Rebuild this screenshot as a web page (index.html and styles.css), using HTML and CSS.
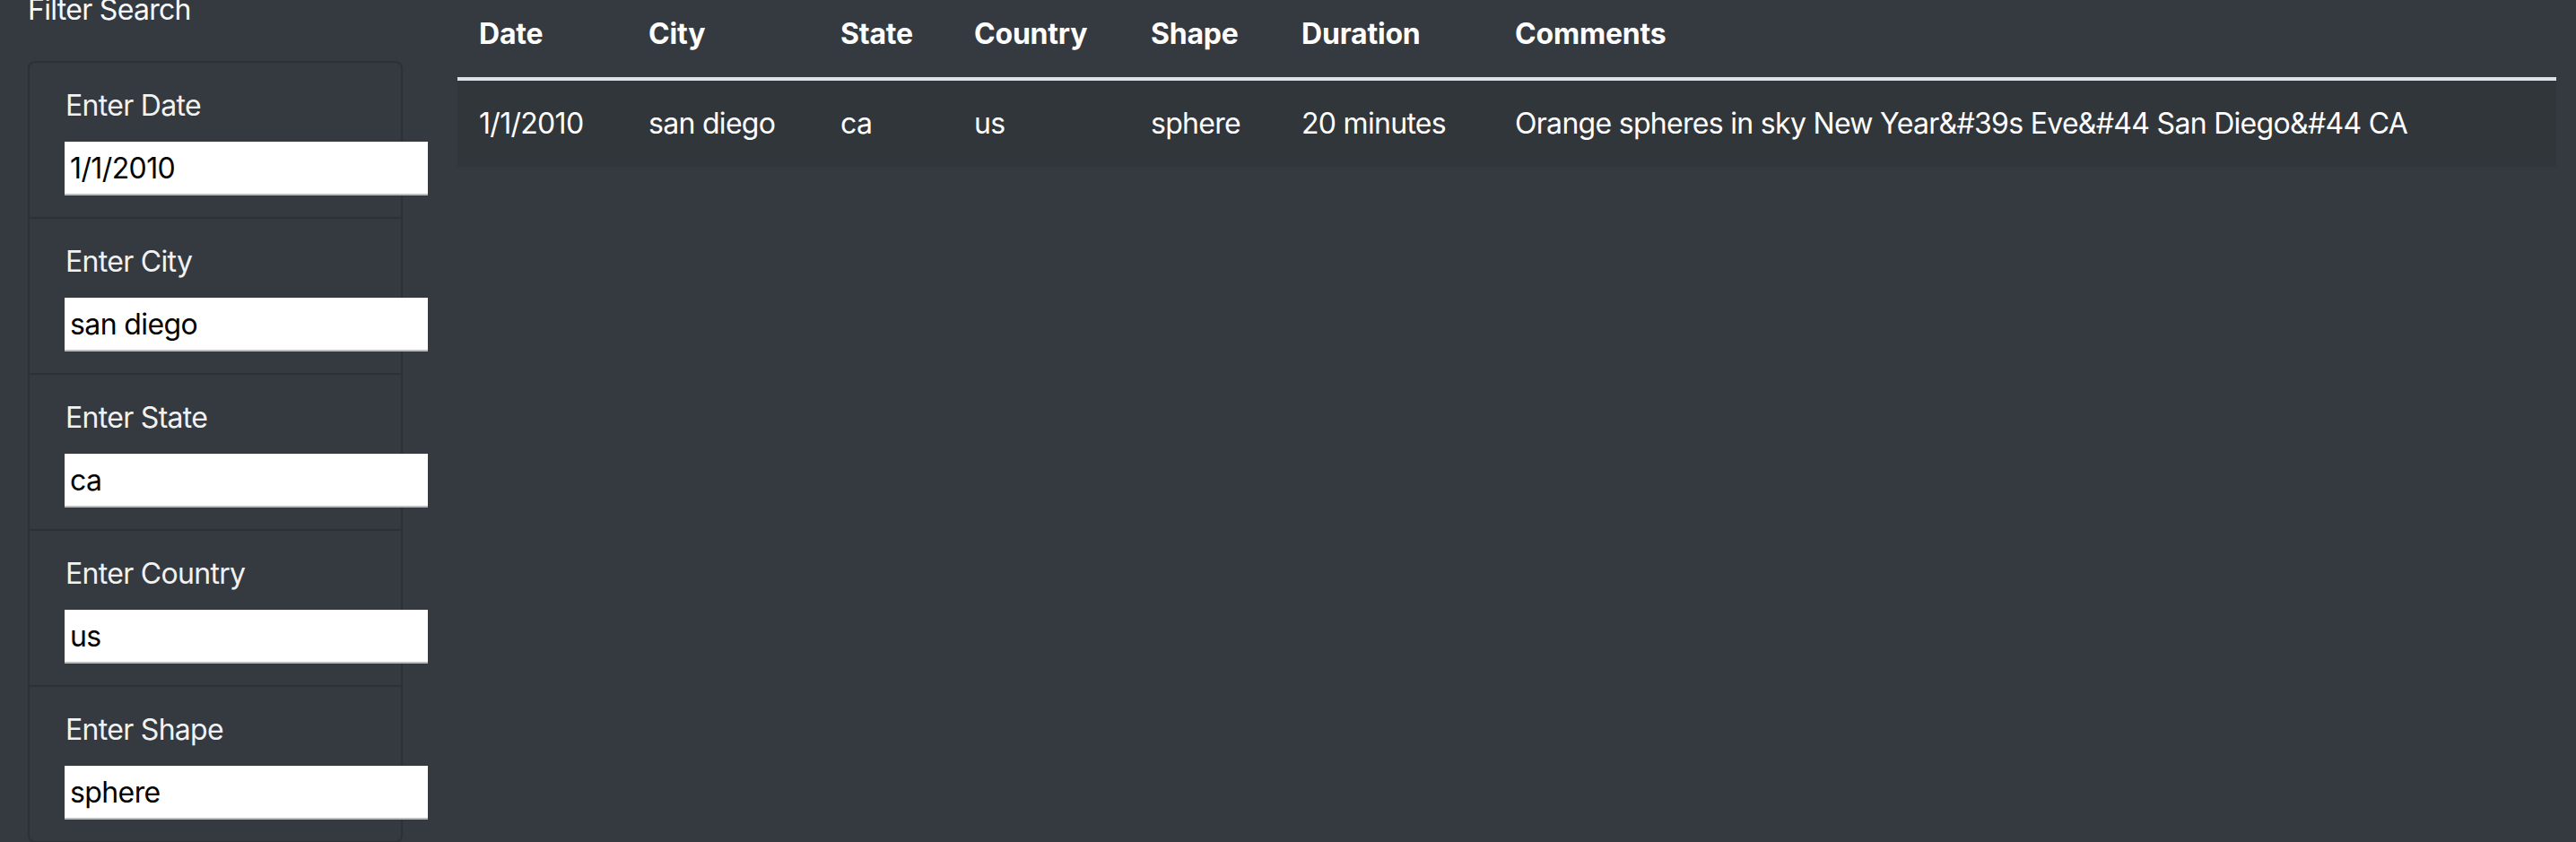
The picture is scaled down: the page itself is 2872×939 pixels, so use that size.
FILE: index.html
```html
<!DOCTYPE html>
<html lang="en">
<head>
<meta charset="utf-8">
<title>UFO Sightings</title>
<link rel="stylesheet" href="styles.css">
</head>
<body>
<div class="page">
  <aside class="sidebar">
    <h5 class="filter-title">Filter Search</h5>
    <ul class="filters">
      <li class="filter"><label class="filter-label" for="datetime">Enter Date</label><input class="filter-input" id="datetime" type="text" value="1/1/2010"></li>
      <li class="filter"><label class="filter-label" for="city">Enter City</label><input class="filter-input" id="city" type="text" value="san diego"></li>
      <li class="filter"><label class="filter-label" for="state">Enter State</label><input class="filter-input" id="state" type="text" value="ca"></li>
      <li class="filter"><label class="filter-label" for="country">Enter Country</label><input class="filter-input" id="country" type="text" value="us"></li>
      <li class="filter"><label class="filter-label" for="shape">Enter Shape</label><input class="filter-input" id="shape" type="text" value="sphere"></li>
    </ul>
  </aside>
  <main class="results">
    <table class="ufo-table">
      <colgroup>
        <col class="c-date"><col class="c-city"><col class="c-state"><col class="c-country"><col class="c-shape"><col class="c-duration"><col class="c-comments">
      </colgroup>
      <thead>
        <tr><th>Date</th><th>City</th><th>State</th><th>Country</th><th>Shape</th><th>Duration</th><th>Comments</th></tr>
      </thead>
      <tbody>
        <tr><td>1/1/2010</td><td>san diego</td><td>ca</td><td>us</td><td>sphere</td><td>20 minutes</td><td>Orange spheres in sky New Year&amp;#39s Eve&amp;#44 San Diego&amp;#44 CA</td></tr>
      </tbody>
    </table>
  </main>
</div>
</body>
</html>
```
FILE: styles.css
```css
html, body {
  margin: 0;
  padding: 0;
  background: #343a40;
  height: 100%;
  overflow: hidden;
}
body {
  font-family: Inter, "Liberation Sans", sans-serif;
  font-size: 32px;
  line-height: 48px;
  letter-spacing: -0.7px;
  color: #f8f9fa;
}
.page {
  display: flex;
  align-items: flex-start;
}
.sidebar {
  width: 418px;
  flex: 0 0 418px;
  padding: 0 29px 0 31px;
  margin-top: -13px;
}
.filter-title {
  margin: 0 0 33px 0;
  font-size: 32px;
  font-weight: 400;
  line-height: 48px;
  color: #f8f9fa;
}
.filters {
  list-style: none;
  margin: 0;
  padding: 0;
  border: 2px solid #2c3136;
  border-radius: 8px;
}
.filter {
  padding: 24px 40px 24px 40px;
  border-top: 2px solid #2c3136;
}
.filter:first-child {
  border-top: 0;
}
.filter-label {
  display: block;
  margin-bottom: 16px;
  font-size: 32px;
  line-height: 48px;
  color: #f1f2f3;
}
.filter-input {
  display: block;
  box-sizing: border-box;
  width: 405px;
  height: 60px;
  margin: 0 0 0 -1px;
  padding: 0 6px;
  border: 0;
  border-bottom: 2px solid #bdbdbd;
  background: #fff;
  color: #000;
  font-family: Inter, "Liberation Sans", sans-serif;
  font-size: 32px;
  letter-spacing: -0.6px;
  outline: none;
}
.results {
  flex: 1 1 auto;
  padding: 0 22px 0 32px;
  margin-top: -10px;
}
.ufo-table {
  width: 100%;
  border-collapse: collapse;
  table-layout: fixed;
  color: #fff;
}
.c-date { width: 189px; }
.c-city { width: 214px; }
.c-state { width: 149px; }
.c-country { width: 197px; }
.c-shape { width: 168px; }
.c-duration { width: 238px; }
.ufo-table th,
.ufo-table td {
  text-align: left;
  padding: 24px 24px;
  vertical-align: top;
  white-space: nowrap;
}
.ufo-table th {
  font-weight: 700;
  letter-spacing: -0.2px;
  border-bottom: 4px solid #dee2e6;
}
.ufo-table tbody tr {
  background: #31363b;
}
```
